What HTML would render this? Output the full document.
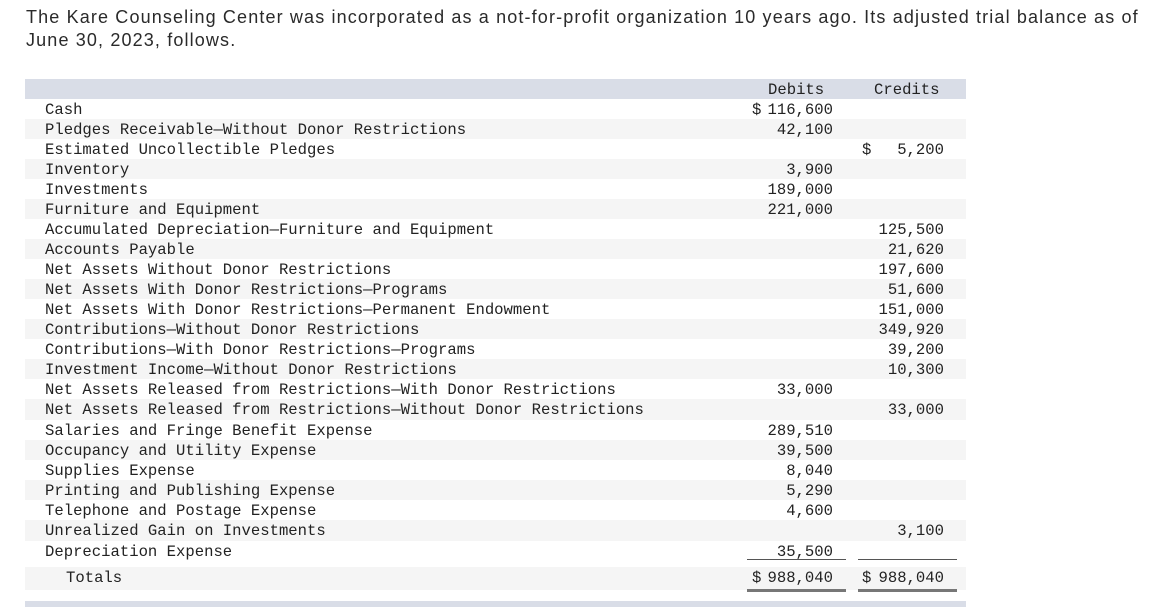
<!DOCTYPE html>
<html><head><meta charset="utf-8"><style>
body{margin:0;width:1151px;height:607px;background:#fff;position:relative;overflow:hidden;color:#222}
.p{position:absolute;left:26px;top:6px;font:18px/23px "Liberation Sans",sans-serif;letter-spacing:1.14px;white-space:nowrap;color:#2a2a2a}
.r{position:absolute;left:25px;width:941px;height:20px;font:15.6px/20px "Liberation Mono","DejaVu Sans Mono",monospace;white-space:pre;color:#222}
.r span{top:1px!important}
.g{background:#f5f5f5}
.h{background:#d9dde7}
.l{position:absolute;left:20px;top:0}
.d{position:absolute;right:133px;top:0}
.c{position:absolute;right:22px;top:0}
.ds{position:absolute;left:727px;top:0}
.cs{position:absolute;left:837px;top:0}
.line{position:absolute;height:1px;background:#555}
</style></head><body>
<div class="p">The Kare Counseling Center was incorporated as a not-for-profit organization 10 years ago. Its adjusted trial balance as of<br>June 30, 2023, follows.</div>

<div class="r h" style="top:79px"><span style="position:absolute;left:743px">Debits</span><span style="position:absolute;left:849px">Credits</span></div>
<div class="r" style="top:99px"><span class="l">Cash</span><span class="ds">$</span><span class="d">116,600</span></div>
<div class="r g" style="top:119px"><span class="l">Pledges Receivable—Without Donor Restrictions</span><span class="d">42,100</span></div>
<div class="r" style="top:139px"><span class="l">Estimated Uncollectible Pledges</span><span class="cs">$</span><span class="c">5,200</span></div>
<div class="r g" style="top:159px"><span class="l">Inventory</span><span class="d">3,900</span></div>
<div class="r" style="top:179px"><span class="l">Investments</span><span class="d">189,000</span></div>
<div class="r g" style="top:199px"><span class="l">Furniture and Equipment</span><span class="d">221,000</span></div>
<div class="r" style="top:219px"><span class="l">Accumulated Depreciation—Furniture and Equipment</span><span class="c">125,500</span></div>
<div class="r g" style="top:239px"><span class="l">Accounts Payable</span><span class="c">21,620</span></div>
<div class="r" style="top:259px"><span class="l">Net Assets Without Donor Restrictions</span><span class="c">197,600</span></div>
<div class="r g" style="top:279px"><span class="l">Net Assets With Donor Restrictions—Programs</span><span class="c">51,600</span></div>
<div class="r" style="top:299px"><span class="l">Net Assets With Donor Restrictions—Permanent Endowment</span><span class="c">151,000</span></div>
<div class="r g" style="top:319px"><span class="l">Contributions—Without Donor Restrictions</span><span class="c">349,920</span></div>
<div class="r" style="top:339px"><span class="l">Contributions—With Donor Restrictions—Programs</span><span class="c">39,200</span></div>
<div class="r g" style="top:359px"><span class="l">Investment Income—Without Donor Restrictions</span><span class="c">10,300</span></div>
<div class="r" style="top:379px"><span class="l">Net Assets Released from Restrictions—With Donor Restrictions</span><span class="d">33,000</span></div>
<div class="r g" style="top:399px;height:21px"><span class="l">Net Assets Released from Restrictions—Without Donor Restrictions</span><span class="c">33,000</span></div>
<div class="r" style="top:420px"><span class="l">Salaries and Fringe Benefit Expense</span><span class="d">289,510</span></div>
<div class="r g" style="top:440px"><span class="l">Occupancy and Utility Expense</span><span class="d">39,500</span></div>
<div class="r" style="top:460px"><span class="l">Supplies Expense</span><span class="d">8,040</span></div>
<div class="r g" style="top:480px"><span class="l">Printing and Publishing Expense</span><span class="d">5,290</span></div>
<div class="r" style="top:500px"><span class="l">Telephone and Postage Expense</span><span class="d">4,600</span></div>
<div class="r g" style="top:520px;height:21px"><span class="l">Unrealized Gain on Investments</span><span class="c">3,100</span></div>
<div class="r" style="top:541px;height:26px"><span class="l">Depreciation Expense</span><span class="d">35,500</span></div>
<div class="r g" style="top:567px;height:23px;line-height:21px"><span class="l" style="left:41px">Totals</span><span class="ds">$</span><span class="d">988,040</span><span class="cs">$</span><span class="c">988,040</span></div>
<div class="line" style="left:747px;width:99px;top:559px"></div>
<div class="line" style="left:858px;width:99px;top:559px"></div>
<div class="line" style="left:747px;width:99px;top:589px;height:3px;background:#777"></div>
<div class="line" style="left:858px;width:99px;top:589px;height:3px;background:#777"></div>
<div style="position:absolute;left:25px;top:601px;width:941px;height:6px;background:#d9dde7"></div>
</body></html>
